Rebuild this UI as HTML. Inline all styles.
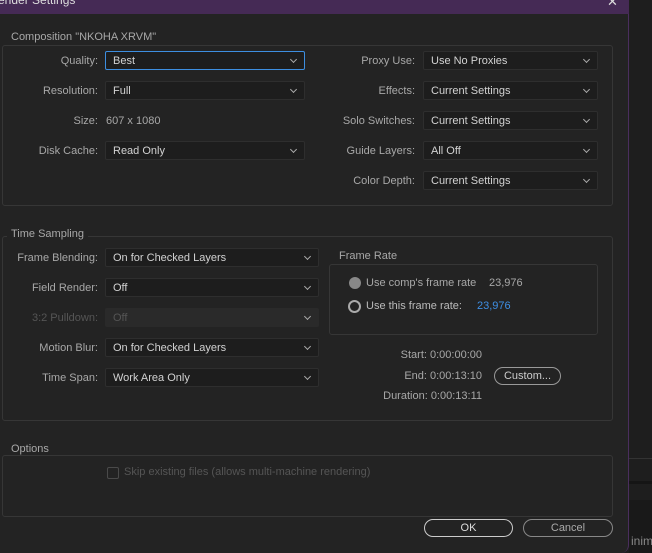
<!DOCTYPE html>
<html><head><meta charset="utf-8"><style>
*{margin:0;padding:0;box-sizing:border-box}
body{width:652px;height:553px;background:#1e1e1e;position:relative;overflow:hidden;font-family:"Liberation Sans",sans-serif;font-size:11px;color:#c8c8c8}
.dlg{position:absolute;left:0;top:0;width:629px;height:553px;background:#232323;border-right:1px solid #4a2e5e;border-bottom-right-radius:8px}
.title{position:absolute;left:0;top:0;width:629px;height:14px;background:#452a55}
.a{position:absolute;white-space:nowrap}
.lbl{position:absolute;text-align:right;color:#a8a8a8;white-space:nowrap}
.dd{position:absolute;height:19px;background:#1d1d1d;border:1px solid #2e2e2e;border-radius:2px;color:#d2d2d2;padding-left:7px;line-height:19px}
.dd:after{content:"";position:absolute;right:8px;top:5px;width:4px;height:4px;border-right:1px solid #aaa;border-bottom:1px solid #aaa;transform:rotate(45deg)}
.grp{position:absolute;border:1px solid #363636;border-radius:3px}
.gl{position:absolute;background:#232323;padding:0 4px;color:#a8a8a8}
.btn{position:absolute;height:18px;border:1px solid #bbb;border-radius:9px;text-align:center;line-height:16px;color:#ccc}
</style></head><body>
<div class="a" style="left:629px;top:458px;width:23px;height:1px;background:#333"></div>
<div class="a" style="left:629px;top:481px;width:23px;height:3px;background:#151515"></div>
<div class="a" style="left:629px;top:500px;width:23px;height:53px;background:#191919"></div>
<div class="a" style="left:631px;top:534px;color:#888;font-size:12px">inim</div>
<div class="dlg">
<div class="title"><span class="a" style="left:-2px;top:-7px;color:#ddd;font-size:12px">ender Settings</span><span class="a" style="left:607px;top:-6px;color:#ddd;font-size:13px">✕</span></div>

<div class="grp" style="left:2px;top:45px;width:611px;height:161px"></div>
<div class="gl" style="left:7px;top:31px">Composition "NKOHA XRVM"</div>
<div class="lbl" style="right:530px;top:55px">Quality:</div>
<div class="dd" style="left:105px;top:51px;width:200px;border-color:#3d8ee0">Best</div>
<div class="lbl" style="right:530px;top:85px">Resolution:</div>
<div class="dd" style="left:105px;top:81px;width:200px">Full</div>
<div class="lbl" style="right:530px;top:115px">Size:</div>
<div class="a" style="left:106px;top:115px;color:#a8a8a8">607 x 1080</div>
<div class="lbl" style="right:530px;top:145px">Disk Cache:</div>
<div class="dd" style="left:105px;top:141px;width:200px">Read Only</div>

<div class="lbl" style="right:213px;top:55px">Proxy Use:</div>
<div class="dd" style="left:423px;top:51px;width:175px">Use No Proxies</div>
<div class="lbl" style="right:213px;top:85px">Effects:</div>
<div class="dd" style="left:423px;top:81px;width:175px">Current Settings</div>
<div class="lbl" style="right:213px;top:115px">Solo Switches:</div>
<div class="dd" style="left:423px;top:111px;width:175px">Current Settings</div>
<div class="lbl" style="right:213px;top:145px">Guide Layers:</div>
<div class="dd" style="left:423px;top:141px;width:175px">All Off</div>
<div class="lbl" style="right:213px;top:175px">Color Depth:</div>
<div class="dd" style="left:423px;top:171px;width:175px">Current Settings</div>

<div class="grp" style="left:2px;top:236px;width:611px;height:185px"></div>
<div class="gl" style="left:7px;top:228px">Time Sampling</div>
<div class="lbl" style="right:530px;top:252px">Frame Blending:</div>
<div class="dd" style="left:105px;top:248px;width:214px">On for Checked Layers</div>
<div class="lbl" style="right:530px;top:282px">Field Render:</div>
<div class="dd" style="left:105px;top:278px;width:214px">Off</div>
<div class="lbl" style="right:530px;top:312px;color:#555">3:2 Pulldown:</div>
<div class="dd" style="left:105px;top:308px;width:214px;background:#2a2a2a;border-color:#2a2a2a;color:#555">Off</div>
<div class="lbl" style="right:530px;top:342px">Motion Blur:</div>
<div class="dd" style="left:105px;top:338px;width:214px">On for Checked Layers</div>
<div class="lbl" style="right:530px;top:372px">Time Span:</div>
<div class="dd" style="left:105px;top:368px;width:214px">Work Area Only</div>

<div class="grp" style="left:329px;top:264px;width:269px;height:71px"></div>
<div class="gl" style="left:335px;top:250px">Frame Rate</div>
<div class="a" style="left:349px;top:277px;width:12px;height:12px;border-radius:50%;background:#888"></div>
<div class="a" style="left:366px;top:277px;color:#a8a8a8">Use comp's frame rate</div>
<div class="a" style="left:489px;top:277px;color:#a8a8a8">23,976</div>
<div class="a" style="left:348px;top:300px;width:13px;height:13px;border-radius:50%;border:2px solid #aaa"></div>
<div class="a" style="left:366px;top:300px;color:#bbb">Use this frame rate:</div>
<div class="a" style="left:477px;top:300px;color:#3e8fe5">23,976</div>

<div class="lbl" style="right:146px;top:349px">Start: 0:00:00:00</div>
<div class="lbl" style="right:146px;top:370px">End: 0:00:13:10</div>
<div class="lbl" style="right:146px;top:390px">Duration: 0:00:13:11</div>
<div class="btn" style="left:494px;top:367px;width:67px;border-color:#999">Custom...</div>

<div class="grp" style="left:2px;top:455px;width:611px;height:62px"></div>
<div class="gl" style="left:7px;top:443px">Options</div>
<div class="a" style="left:107px;top:467px;width:12px;height:12px;border:1px solid #4a4a4a;border-radius:2px"></div>
<div class="a" style="left:124px;top:466px;color:#555">Skip existing files (allows multi-machine rendering)</div>

<div class="btn" style="left:424px;top:519px;width:89px;border-color:#ccc;color:#ddd">OK</div>
<div class="btn" style="left:523px;top:519px;width:90px;border-color:#888;color:#aaa">Cancel</div>
</div>
</body></html>
